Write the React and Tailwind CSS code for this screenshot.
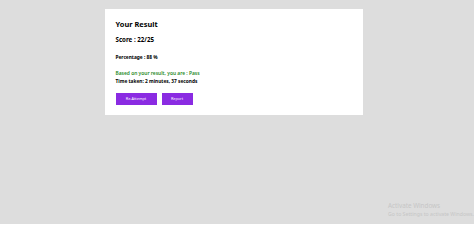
import React from 'react';

// Quiz result card
const ResultCard = ({ score, total, percentage, verdict, timeTaken }) => (
  <div className="ml-[105px] w-[258px] bg-white pt-[9.6px] pb-[10px] pl-[10.5px]">
    <h1 className="text-[7.4px] leading-[10px] font-bold text-black">Your Result</h1>
    <h2 className="mt-[7px] text-[6.2px] leading-[8px] font-bold text-black">
      Score : {score}/{total}
    </h2>
    <p className="mt-[10px] text-[4.8px] leading-[6px] font-bold text-black">
      Percentage : {percentage} %
    </p>
    <p className="mt-[10.5px] text-[4.9px] leading-[6px] font-semibold text-[#1f8a1f]">
      Based on your result, you are : {verdict}
    </p>
    <p className="mt-[2px] text-[4.8px] leading-[6px] font-bold text-black">
      Time taken: {timeTaken}
    </p>
    <div className="mt-[8.9px] flex gap-[5px]">
      <button className="h-[12px] w-[41px] bg-[#8a2be2] text-[3.8px] text-white">Re-Attempt</button>
      <button className="h-[12px] w-[31px] bg-[#8a2be2] text-[3.8px] text-white">Report</button>
    </div>
  </div>
);

export default function App() {
  return (
    <div
      className="relative h-[224px] w-[474px] overflow-hidden bg-[#dddddd] pt-[9px]"
      style={{ fontFamily: '"Noto Sans", "Open Sans", sans-serif' }}
    >
      <ResultCard score={22} total={25} percentage={88} verdict="Pass" timeTaken="2 minutes, 37 seconds" />

      {/* windows watermark */}
      <div className="absolute left-[388px] top-[201.5px] text-[#c6c6c6]">
        <p className="text-[6.3px] leading-[8px]">Activate Windows</p>
        <p className="mt-[1.1px] text-[5.2px] leading-[6px]">Go to Settings to activate Windows.</p>
      </div>
    </div>
  );
}
